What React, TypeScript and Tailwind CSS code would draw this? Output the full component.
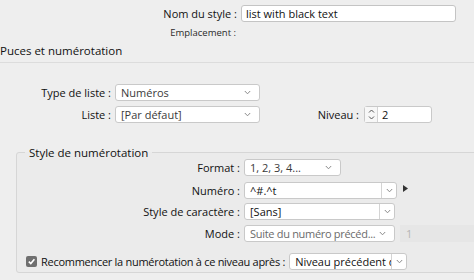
import type { ReactNode } from 'react'

function Chevron({ className = '' }: { className?: string }) {
  return (
    <svg width="7" height="5" viewBox="0 0 7 5" className={className}>
      <path d="M0.8 1 L3.5 3.8 L6.2 1" fill="none" stroke="#8a8a8a" strokeWidth="1" />
    </svg>
  )
}

// Popup menu: text plus chevron in one box
function Popup({ value, width, muted = false }: { value: string; width: string; muted?: boolean }) {
  return (
    <div className={`${width} h-[17px] flex items-center bg-white border border-[#c9c9c9] rounded-[3px] pl-[5px] pr-[8px]`}>
      <span className={`flex-1 leading-[15px] overflow-hidden whitespace-nowrap ${muted ? 'text-[#6b6b6b] tracking-[-0.3px]' : 'text-[#3a3a3a]'}`}>{value}</span>
      <Chevron />
    </div>
  )
}

// Combo box: editable field with a separate dropdown button
function Combo({ value, width }: { value: string; width: string }) {
  return (
    <div className={`${width} h-[17px] flex bg-white border border-[#c9c9c9] rounded-[3px]`}>
      <span className="flex-1 pl-[5px] leading-[15px] overflow-hidden whitespace-nowrap text-[#111]">{value}</span>
      <div className="w-[15px] border-l border-[#d4d4d4] flex items-center justify-center">
        <Chevron />
      </div>
    </div>
  )
}

function Row({ label, labelW, children, className = '' }: {
  label: string; labelW: string; children: ReactNode; className?: string
}) {
  return (
    <div className={`flex items-center ${className}`}>
      <div className={`${labelW} text-right pr-[4px] text-[#111] whitespace-nowrap`}>{label}</div>
      {children}
    </div>
  )
}

export default function App() {
  return (
    <div className="w-[474px] h-[280px] overflow-hidden bg-[#eeeeee] text-[11px] leading-none"
      style={{ fontFamily: '"Open Sans", "Noto Sans", sans-serif' }}>

      {/* Style name */}
      <Row label="Nom du style :" labelW="w-[241px]" className="pt-[5px]">
        <div className="w-[215px] h-[17px] bg-white border border-[#c4c4c4] rounded-[3px] pl-[4px] flex items-center text-[#111]">
          list with black text
        </div>
      </Row>
      <div className="flex mt-[6px]">
        <div className="w-[238px] text-right text-[9.5px] text-[#2a2a2a] pr-[2px]">Emplacement :</div>
      </div>

      {/* Section header */}
      <div className="mt-[7px] h-[18px] border-b border-[#dcdcdc] text-[11.5px] text-[#111]">
        Puces et numérotation
      </div>

      <Row label="Type de liste :" labelW="w-[115px]" className="mt-[21px]">
        <Popup value="Numéros" width="w-[145px]" />
      </Row>
      <Row label="Liste :" labelW="w-[115px]" className="mt-[5px]">
        <Popup value="[Par défaut]" width="w-[145px]" />
        <div className="w-[104px] text-right pr-[5px] text-[#111]">Niveau :</div>
        <div className="flex h-[17px] border border-[#c9c9c9] rounded-[3px] bg-white">
          <div className="w-[13px] border-r border-[#d4d4d4] flex items-center justify-center bg-[#f7f7f7]">
            <svg width="7" height="13" viewBox="0 0 7 13">
              <path d="M1 4.5 L3.5 2 L6 4.5 M1 8.5 L3.5 11 L6 8.5" fill="none" stroke="#555" strokeWidth="1" />
            </svg>
          </div>
          <div className="w-[53px] pl-[4px] flex items-center text-[#111]">2</div>
        </div>
      </Row>

      {/* Numbering style group */}
      <fieldset className="ml-[16px] mt-[24px] -mr-[10px] border border-[#d6d6d6] rounded-[3px] bg-[#ebebeb] pb-[2px]">
        <legend className="ml-[8px] px-[4px] text-[11.5px] text-[#111]">Style de numérotation</legend>
        <Row label="Format :" labelW="w-[227px]" className="mt-[1px]">
          <Popup value="1, 2, 3, 4..." width="w-[97px]" />
        </Row>
        <Row label="Numéro :" labelW="w-[227px]" className="mt-[6px]">
          <Combo value="^#.^t" width="w-[153px]" />
          <svg width="5" height="7" viewBox="0 0 5 7" className="ml-[6px] -mt-[4px]">
            <path d="M0 0 L5 3.5 L0 7 Z" fill="#333" />
          </svg>
        </Row>
        <Row label="Style de caractère :" labelW="w-[227px]" className="mt-[4px]">
          <Combo value="[Sans]" width="w-[151px]" />
        </Row>
        <Row label="Mode :" labelW="w-[227px]" className="mt-[5px]">
          <Popup value="Suite du numéro précéd..." width="w-[151px]" muted />
          <div className="ml-[5px] flex-1 h-[17px] bg-[#e6e6e6] flex items-center pl-[6px] text-[#b5b5b5]">1</div>
        </Row>
        <div className="flex items-center mt-[11px] pl-[9px]">
          <div className="w-[11px] h-[11px] rounded-[2px] bg-[#6f6f6f] flex items-center justify-center">
            <svg width="9" height="9" viewBox="0 0 9 9">
              <path d="M1.8 4.6 L3.8 6.6 L7.4 2.2" fill="none" stroke="#fff" strokeWidth="1.6" />
            </svg>
          </div>
          <span className="ml-[4px] text-[#111] whitespace-nowrap tracking-[-0.28px]">Recommencer la numérotation à ce niveau après :</span>
          <div className="ml-[4px] w-[118px] h-[17px] flex bg-white border border-[#c9c9c9] rounded-[3px] shrink-0">
            <span className="flex-1 pl-[5px] leading-[15px] overflow-hidden whitespace-nowrap text-[#111]">Niveau précédent quelconque</span>
            <div className="w-[15px] border-l border-[#d4d4d4] flex items-center justify-center">
              <Chevron />
            </div>
          </div>
        </div>
      </fieldset>
    </div>
  )
}
